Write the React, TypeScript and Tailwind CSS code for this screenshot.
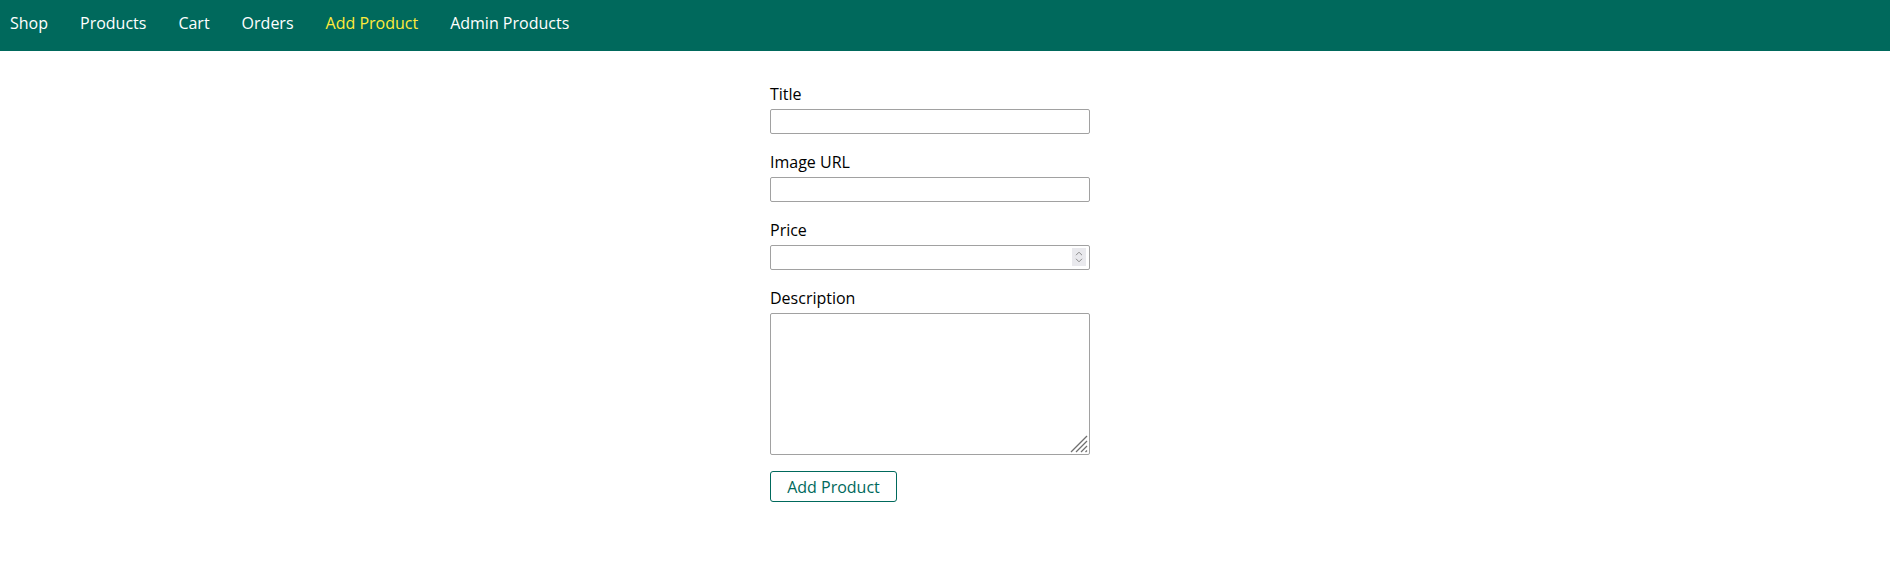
import { useState } from "react";

const NAV_ITEMS = [
  { label: "Shop", active: false },
  { label: "Products", active: false },
  { label: "Cart", active: false },
  { label: "Orders", active: false },
  { label: "Add Product", active: true },
  { label: "Admin Products", active: false },
];

const inputClass =
  "block w-[320px] h-[25px] border border-[#a1a1a1] rounded-[2px] px-[2px] text-[16px] outline-none bg-white";

export default function App() {
  const [title, setTitle] = useState("");
  const [imageUrl, setImageUrl] = useState("");
  const [price, setPrice] = useState("");
  const [description, setDescription] = useState("");

  return (
    <div className="min-h-screen bg-white text-black font-['Open_Sans',sans-serif]">
      <header className="h-[51px] w-full bg-[#00695c] pl-[10px] flex items-center">
        <nav>
          <ul className="flex gap-8 -mt-[5px]">
            {NAV_ITEMS.map((item) => (
              <li key={item.label}>
                <a
                  href="#"
                  className={`text-[16px] leading-[22px] ${item.active ? "text-[#ffeb3b]" : "text-white"}`}
                >
                  {item.label}
                </a>
              </li>
            ))}
          </ul>
        </nav>
      </header>

      <main>
        <form className="w-[350px] mx-auto pt-[32px]" onSubmit={(e) => e.preventDefault()}>
          <div className="mb-[17px]">
            <label htmlFor="title" className="block text-[16px] leading-[22px] mb-[4px]">Title</label>
            <input id="title" type="text" className={inputClass} value={title} onChange={(e) => setTitle(e.target.value)} />
          </div>
          <div className="mb-[17px]">
            <label htmlFor="imageUrl" className="block text-[16px] leading-[22px] mb-[4px]">Image URL</label>
            <input id="imageUrl" type="text" className={inputClass} value={imageUrl} onChange={(e) => setImageUrl(e.target.value)} />
          </div>
          <div className="mb-[17px]">
            <label htmlFor="price" className="block text-[16px] leading-[22px] mb-[4px]">Price</label>
            <div className="relative w-[320px]">
              <input id="price" type="text" inputMode="decimal" className={inputClass} value={price} onChange={(e) => setPrice(e.target.value)} />
              {/* spin buttons */}
              <div className="absolute right-[4px] top-[3px] w-[14px] h-[18px] bg-[#e9e9ed] flex flex-col items-center justify-center gap-[2px]">
                <svg width="8" height="5" viewBox="0 0 8 5" fill="none">
                  <path d="M1 4.2 L4 1.2 L7 4.2" stroke="#8a8a8a" strokeWidth="1" />
                </svg>
                <svg width="8" height="5" viewBox="0 0 8 5" fill="none">
                  <path d="M1 0.8 L4 3.8 L7 0.8" stroke="#8a8a8a" strokeWidth="1" />
                </svg>
              </div>
            </div>
          </div>
          <div className="mb-[16px]">
            <label htmlFor="description" className="block text-[16px] leading-[22px] mb-[4px]">Description</label>
            <div className="relative w-[320px]">
              <textarea
                id="description"
                className="block w-[320px] h-[142px] border border-[#a1a1a1] rounded-[2px] px-[2px] text-[16px] outline-none resize-none"
                value={description}
                onChange={(e) => setDescription(e.target.value)}
              />
              {/* resize grip */}
              <svg
                className="absolute right-[2px] bottom-[2px] pointer-events-none"
                width="18"
                height="18"
                viewBox="0 0 18 18"
                fill="none"
              >
                <path d="M1 17 L17 1" stroke="#6f6f6f" strokeWidth="1.3" />
                <path d="M6 17 L17 6" stroke="#6f6f6f" strokeWidth="1.3" />
                <path d="M11 17 L17 11" stroke="#6f6f6f" strokeWidth="1.3" />
                <path d="M15.5 17 L17 15.5" stroke="#6f6f6f" strokeWidth="1.3" />
              </svg>
            </div>
          </div>
          <button
            type="submit"
            className="h-[31px] w-[127px] border border-[#00695c] rounded-[3px] text-[#00695c] text-[16px] leading-[22px] bg-white cursor-pointer"
          >
            Add Product
          </button>
        </form>
      </main>
    </div>
  );
}
